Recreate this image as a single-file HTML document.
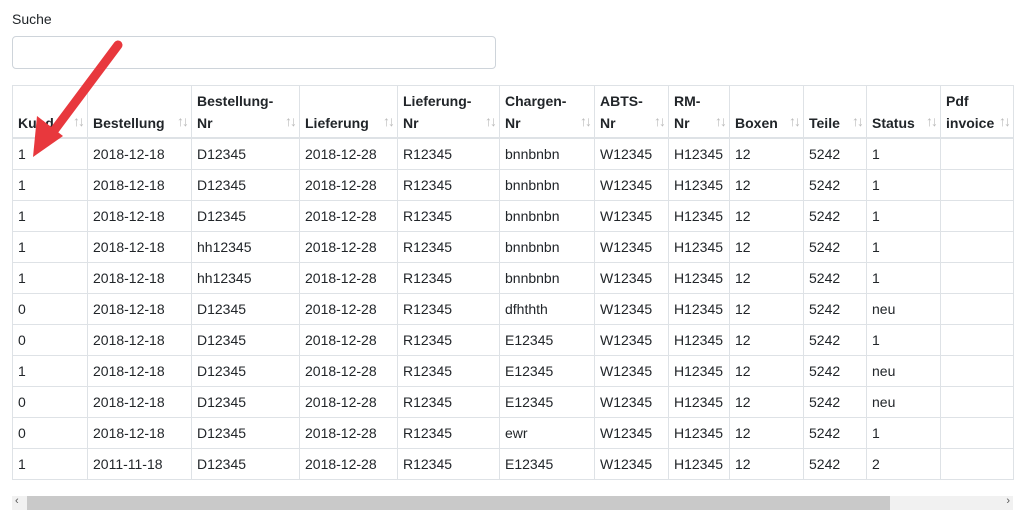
<!DOCTYPE html>
<html><head><meta charset="utf-8"><style>
body{margin:0;background:#fff;font-family:"Liberation Sans",sans-serif;font-size:14px;color:#212529;width:1023px;height:529px;overflow:hidden;position:relative}
.lbl{position:absolute;left:12px;top:11px;font-size:14px}
.inp{position:absolute;left:12px;top:36px;width:484px;height:33px;border:1px solid #ced4da;border-radius:4px;box-sizing:border-box}
table{position:absolute;left:12px;top:85px;border-collapse:collapse;table-layout:fixed}
td,th{border:1px solid #dee2e6;padding:0 5px;text-align:left;height:30px;white-space:nowrap;overflow:hidden}
th{height:48px;vertical-align:bottom;padding-bottom:3px;font-weight:bold;line-height:22px;position:relative;border-bottom:2px solid #dee2e6;white-space:normal}
th span{position:absolute;right:4px;bottom:5px;color:#bbb;font-weight:normal;font-size:14px;letter-spacing:-2px}
.sb{position:absolute;left:12px;top:496px;width:1001px;height:14px;background:#f1f1f1}
.th{position:absolute;left:15px;top:0;width:863px;height:14px;background:#c9c9c9}
.sb i{position:absolute;top:-1px;font-style:normal;font-size:11px;color:#555}
</style></head><body>
<div class="lbl">Suche</div>
<div class="inp"></div>
<table>
<colgroup><col style="width:75px"><col style="width:104px"><col style="width:108px"><col style="width:98px"><col style="width:102px"><col style="width:95px"><col style="width:74px"><col style="width:61px"><col style="width:74px"><col style="width:63px"><col style="width:74px"><col style="width:73px"></colgroup>
<tr><th>Kund<span>↑↓</span></th><th>Bestellung<span>↑↓</span></th><th>Bestellung-<br>Nr<span>↑↓</span></th><th>Lieferung<span>↑↓</span></th><th>Lieferung-<br>Nr<span>↑↓</span></th><th>Chargen-<br>Nr<span>↑↓</span></th><th>ABTS-<br>Nr<span>↑↓</span></th><th>RM-<br>Nr<span>↑↓</span></th><th>Boxen<span>↑↓</span></th><th>Teile<span>↑↓</span></th><th>Status<span>↑↓</span></th><th>Pdf<br>invoice<span>↑↓</span></th></tr>
<tr><td>1</td><td>2018-12-18</td><td>D12345</td><td>2018-12-28</td><td>R12345</td><td>bnnbnbn</td><td>W12345</td><td>H12345</td><td>12</td><td>5242</td><td>1</td><td></td></tr>
<tr><td>1</td><td>2018-12-18</td><td>D12345</td><td>2018-12-28</td><td>R12345</td><td>bnnbnbn</td><td>W12345</td><td>H12345</td><td>12</td><td>5242</td><td>1</td><td></td></tr>
<tr><td>1</td><td>2018-12-18</td><td>D12345</td><td>2018-12-28</td><td>R12345</td><td>bnnbnbn</td><td>W12345</td><td>H12345</td><td>12</td><td>5242</td><td>1</td><td></td></tr>
<tr><td>1</td><td>2018-12-18</td><td>hh12345</td><td>2018-12-28</td><td>R12345</td><td>bnnbnbn</td><td>W12345</td><td>H12345</td><td>12</td><td>5242</td><td>1</td><td></td></tr>
<tr><td>1</td><td>2018-12-18</td><td>hh12345</td><td>2018-12-28</td><td>R12345</td><td>bnnbnbn</td><td>W12345</td><td>H12345</td><td>12</td><td>5242</td><td>1</td><td></td></tr>
<tr><td>0</td><td>2018-12-18</td><td>D12345</td><td>2018-12-28</td><td>R12345</td><td>dfhthth</td><td>W12345</td><td>H12345</td><td>12</td><td>5242</td><td>neu</td><td></td></tr>
<tr><td>0</td><td>2018-12-18</td><td>D12345</td><td>2018-12-28</td><td>R12345</td><td>E12345</td><td>W12345</td><td>H12345</td><td>12</td><td>5242</td><td>1</td><td></td></tr>
<tr><td>1</td><td>2018-12-18</td><td>D12345</td><td>2018-12-28</td><td>R12345</td><td>E12345</td><td>W12345</td><td>H12345</td><td>12</td><td>5242</td><td>neu</td><td></td></tr>
<tr><td>0</td><td>2018-12-18</td><td>D12345</td><td>2018-12-28</td><td>R12345</td><td>E12345</td><td>W12345</td><td>H12345</td><td>12</td><td>5242</td><td>neu</td><td></td></tr>
<tr><td>0</td><td>2018-12-18</td><td>D12345</td><td>2018-12-28</td><td>R12345</td><td>ewr</td><td>W12345</td><td>H12345</td><td>12</td><td>5242</td><td>1</td><td></td></tr>
<tr><td>1</td><td>2011-11-18</td><td>D12345</td><td>2018-12-28</td><td>R12345</td><td>E12345</td><td>W12345</td><td>H12345</td><td>12</td><td>5242</td><td>2</td><td></td></tr>
</table>
<div class="sb"><div class="th"></div><i style="left:3px">‹</i><i style="right:3px">›</i></div>
<svg style="position:absolute;left:0;top:0" width="200" height="200">
<line x1="118" y1="45" x2="50" y2="136" stroke="#e8383d" stroke-width="9" stroke-linecap="round"/>
<polygon points="33,157 37,116 63,136" fill="#e8383d"/>
</svg>
</body></html>
